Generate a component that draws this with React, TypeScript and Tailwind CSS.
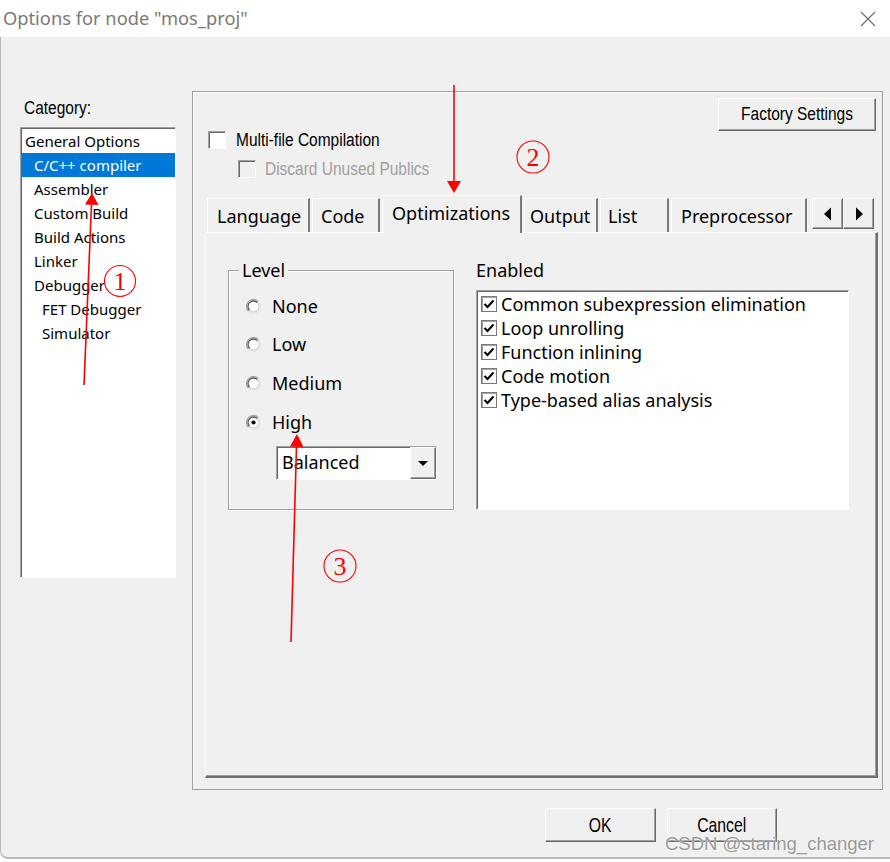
import React from "react"

const ui = "font-['Noto_Sans',sans-serif]"
const classic = "font-['Liberation_Sans',Arial,sans-serif]"

const raised =
  "bg-[#f0f0f0] border border-t-white border-l-white border-r-[#696969] border-b-[#696969] shadow-[inset_-1px_-1px_0_#a0a0a0]"
const sunken =
  "border border-t-[#a0a0a0] border-l-[#a0a0a0] border-r-white border-b-white shadow-[inset_1px_1px_0_#696969]"

const categories = [
  { label: "General Options", pad: "pl-[3px]" },
  { label: "C/C++ compiler", pad: "pl-[12px]", selected: true },
  { label: "Assembler", pad: "pl-[12px]" },
  { label: "Custom Build", pad: "pl-[12px]" },
  { label: "Build Actions", pad: "pl-[12px]" },
  { label: "Linker", pad: "pl-[12px]" },
  { label: "Debugger", pad: "pl-[12px]" },
  { label: "FET Debugger", pad: "pl-[20px]" },
  { label: "Simulator", pad: "pl-[20px]" },
]

const tabs = [
  { label: "Language", width: "w-[103px]", pad: "pl-[9px]" },
  { label: "Code", width: "w-[68px]", pad: "pl-[8px]" },
  { label: "Optimizations", width: "w-[140px]", pad: "pl-[9px]", active: true },
  { label: "Output", width: "w-[74px]", pad: "pl-[5px]" },
  { label: "List", width: "w-[69px]", pad: "pl-[7px]" },
  { label: "Preprocessor", width: "w-[136px]", pad: "pl-[9px]" },
]

const levels = ["None", "Low", "Medium", "High"]

const enabled = [
  "Common subexpression elimination",
  "Loop unrolling",
  "Function inlining",
  "Code motion",
  "Type-based alias analysis",
]

// classic dialog font is narrow, squeeze Arial a bit
const Narrow = ({ children, className = "" }: { children: React.ReactNode; className?: string }) => (
  <span className={`inline-block whitespace-nowrap scale-x-[0.86] origin-left ${classic} ${className}`}>
    {children}
  </span>
)

const Radio = ({ checked }: { checked?: boolean }) => (
  <svg width="15" height="15" viewBox="0 0 15 15" className="shrink-0">
    <circle cx="7.5" cy="7.5" r="6" fill="#fff" />
    <path d="M2.55 12.45 A7 7 0 0 1 12.45 2.55" fill="none" stroke="#a0a0a0" strokeWidth="1.2" />
    <path d="M12.45 2.55 A7 7 0 0 1 2.55 12.45" fill="none" stroke="#e6e6e6" strokeWidth="1.2" />
    <path d="M3.6 11.4 A5.5 5.5 0 0 1 11.4 3.6" fill="none" stroke="#555" strokeWidth="1.3" />
    <path d="M11.4 3.6 A5.5 5.5 0 0 1 3.6 11.4" fill="none" stroke="#cfcfcf" strokeWidth="1.1" />
    {checked && <circle cx="7.5" cy="7.5" r="2.1" fill="#000" />}
  </svg>
)

const CheckMark = () => (
  <svg width="12" height="12" viewBox="0 0 12 12">
    <path d="M1.5 6 L4.5 9 L10.5 2.5" fill="none" stroke="#000" strokeWidth="2.2" />
  </svg>
)

const Triangle = ({ dir }: { dir: "down" | "left" | "right" }) => {
  const d =
    dir === "down"
      ? "M2 5 L12 5 L7 10 Z"
      : dir === "left"
        ? "M10 0.5 L10 13.5 L3 7 Z"
        : "M4 0.5 L4 13.5 L11 7 Z"
  return (
    <svg width="14" height="14" viewBox="0 0 14 14">
      <path d={d} fill="#000" />
    </svg>
  )
}

const Annotations = () => (
  <svg
    className="absolute inset-0 pointer-events-none"
    width="890"
    height="862"
    viewBox="0 0 890 862"
  >
    <g stroke="#ff0000" strokeWidth="1.6" fill="none">
      <line x1="84" y1="385" x2="91.5" y2="204" />
      <line x1="454" y1="85" x2="454" y2="182" />
      <line x1="291" y1="642" x2="296.5" y2="446" />
    </g>
    <g fill="#ff0000">
      <path d="M92 193 L98.5 205 L85 204.5 Z" />
      <path d="M454 193 L461 181 L447 181 Z" />
      <path d="M297 434 L303.5 447 L290 446.5 Z" />
    </g>
    <g stroke="#ff0000" strokeWidth="1.1" fill="none">
      <circle cx="120" cy="281" r="15.5" />
      <circle cx="533" cy="157" r="16" />
      <circle cx="340" cy="566" r="16" />
    </g>
    <g fill="#ff0000" fontFamily="'Liberation Serif', serif" fontSize="26" textAnchor="middle">
      <text x="120" y="290">1</text>
      <text x="533" y="166">2</text>
      <text x="340" y="575">3</text>
    </g>
  </svg>
)

export default function App() {
  return (
    <div className={`relative w-[890px] h-[862px] bg-white overflow-hidden flex flex-col text-black ${ui}`}>
      {/* title bar */}
      <div className="h-[37px] shrink-0 flex items-center justify-between pl-[3px] pr-[14px]">
        <span className="text-[18.3px] text-[#7a7a7a] leading-none">Options for node "mos_proj"</span>
        <svg width="16" height="16" viewBox="0 0 16 16">
          <path d="M1 1 L15 15 M15 1 L1 15" stroke="#6a6a6a" strokeWidth="1.1" />
        </svg>
      </div>

      {/* dialog body */}
      <div className="h-[822px] shrink-0 bg-[#f0f0f0] border-b-2 border-l border-[#b9b9b9] rounded-bl-[8px] flex">
        {/* category column */}
        <div className="ml-[19px] mt-[60px] w-[156px] flex flex-col">
          <div className="h-[20px] leading-[20px] pl-[4px] text-[18px]">
            <Narrow>Category:</Narrow>
          </div>
          <div className={`mt-[10px] h-[451px] bg-white ${sunken} pt-[1px] pl-[1px]`}>
            {categories.map((c) => (
              <div
                key={c.label}
                className={`h-[24px] leading-[24px] text-[15px] whitespace-nowrap ${c.pad} ${
                  c.selected ? "bg-[#0078d7] text-white" : ""
                }`}
              >
                {c.label}
              </div>
            ))}
          </div>
        </div>

        {/* options column */}
        <div className="ml-[16px] mt-[54px] flex flex-col">
          <div className="w-[691px] h-[699px] border border-[#a0a0a0] shadow-[inset_1px_1px_0_#fff] flex flex-col">
            <div className="flex justify-end pr-[6px] pt-[6px]">
              <div className={`w-[158px] h-[33px] ${raised} flex items-center justify-center text-[18px]`}>
                <span className={`inline-block whitespace-nowrap scale-x-[0.86] ${classic}`}>Factory Settings</span>
              </div>
            </div>

            <div className="h-[18px] flex items-center pl-[15px] text-[18px]">
              <span className={`w-[18px] h-[18px] bg-white ${sunken}`} />
              <span className="ml-[10px]">
                <Narrow>Multi-file Compilation</Narrow>
              </span>
            </div>

            <div className="mt-[11px] h-[18px] flex items-center pl-[45px] text-[18px] text-[#a0a0a0]">
              <span className={`w-[18px] h-[18px] bg-[#f0f0f0] ${sunken}`} />
              <span className="ml-[9px]">
                <Narrow>Discard Unused Publics</Narrow>
              </span>
            </div>

            {/* tab strip */}
            <div className="mt-[17px] h-[37px] flex items-end gap-[2px] pl-[14px]">
              {tabs.map((t) =>
                t.active ? (
                  <div
                    key={t.label}
                    className={`${t.width} ${t.pad} h-[38px] -mb-[1px] relative z-10 bg-[#f0f0f0] border-t border-l border-white border-r-2 border-r-[#7a7a7a] pt-[4px] text-[18px] leading-[26px] whitespace-nowrap`}
                  >
                    {t.label}
                  </div>
                ) : (
                  <div
                    key={t.label}
                    className={`${t.width} ${t.pad} h-[34px] bg-[#f0f0f0] border-t border-l border-white border-r-2 border-r-[#7a7a7a] pt-[3px] text-[18px] leading-[28px] whitespace-nowrap`}
                  >
                    {t.label}
                  </div>
                )
              )}
              <div className="self-start mt-[3px] ml-[3px] flex">
                <div className={`w-[31px] h-[31px] ${raised} flex items-center justify-center`}>
                  <Triangle dir="left" />
                </div>
                <div className={`w-[31px] h-[31px] ${raised} flex items-center justify-center`}>
                  <Triangle dir="right" />
                </div>
              </div>
            </div>

            {/* tab page */}
            <div className="ml-[12px] w-[673px] h-[546px] border-t border-l border-white border-r-2 border-b-2 border-r-[#6f6f6f] border-b-[#6f6f6f] shadow-[inset_-1px_-1px_0_#a0a0a0] flex items-start">
              {/* Level group */}
              <div className="relative ml-[22px] mt-[37px] w-[226px] h-[240px] border border-[#a0a0a0] shadow-[inset_1px_1px_0_#fff,1px_1px_0_#fff] pt-[16px]">
                <span className="absolute -top-[14px] left-[10px] px-[3px] bg-[#f0f0f0] text-[18px] leading-[26px]">
                  Level
                </span>
                {levels.map((l) => (
                  <div key={l} className="h-[38.67px] flex items-center pl-[17px] gap-[11px] text-[18px]">
                    <Radio checked={l === "High"} />
                    <span>{l}</span>
                  </div>
                ))}
                <div className={`ml-[47px] mt-[4px] w-[161px] h-[34px] flex bg-white ${sunken}`}>
                  <div className="flex-1 flex items-center pl-[5px] text-[18px]">Balanced</div>
                  <div className={`w-[26px] ${raised} flex items-center justify-center`}>
                    <Triangle dir="down" />
                  </div>
                </div>
              </div>

              {/* Enabled list */}
              <div className="ml-[22px] mt-[24px] flex flex-col">
                <div className="h-[26px] leading-[26px] text-[18px]">Enabled</div>
                <div className={`mt-[7px] w-[373px] h-[220px] bg-white ${sunken} pt-[1px] pl-[4px]`}>
                  {enabled.map((e) => (
                    <div key={e} className="h-[24px] flex items-center gap-[4px] text-[18px] whitespace-nowrap">
                      <span className="w-[16px] h-[16px] border border-[#7a7a7a] shadow-[inset_1px_1px_0_#a0a0a0] bg-white flex items-center justify-center">
                        <CheckMark />
                      </span>
                      <span>{e}</span>
                    </div>
                  ))}
                </div>
              </div>
            </div>
          </div>

          {/* OK / Cancel */}
          <div className="mt-[18px] flex justify-end gap-[11px] pr-[106px]">
            <div className={`w-[111px] h-[34px] ${raised} flex items-center justify-center text-[21px]`}>
              <span className={`inline-block scale-x-75 ${classic}`}>OK</span>
            </div>
            <div className={`w-[110px] h-[34px] ${raised} flex items-center justify-center text-[21px]`}>
              <span className={`inline-block scale-x-75 ${classic}`}>Cancel</span>
            </div>
          </div>
        </div>
      </div>

      <span
        className={`absolute left-[665px] top-[830px] text-[18.5px] text-[#9a9a9a] whitespace-nowrap [text-shadow:0_0_2px_#fff] ${classic}`}
      >
        CSDN @staring_changer
      </span>

      <Annotations />
    </div>
  )
}
